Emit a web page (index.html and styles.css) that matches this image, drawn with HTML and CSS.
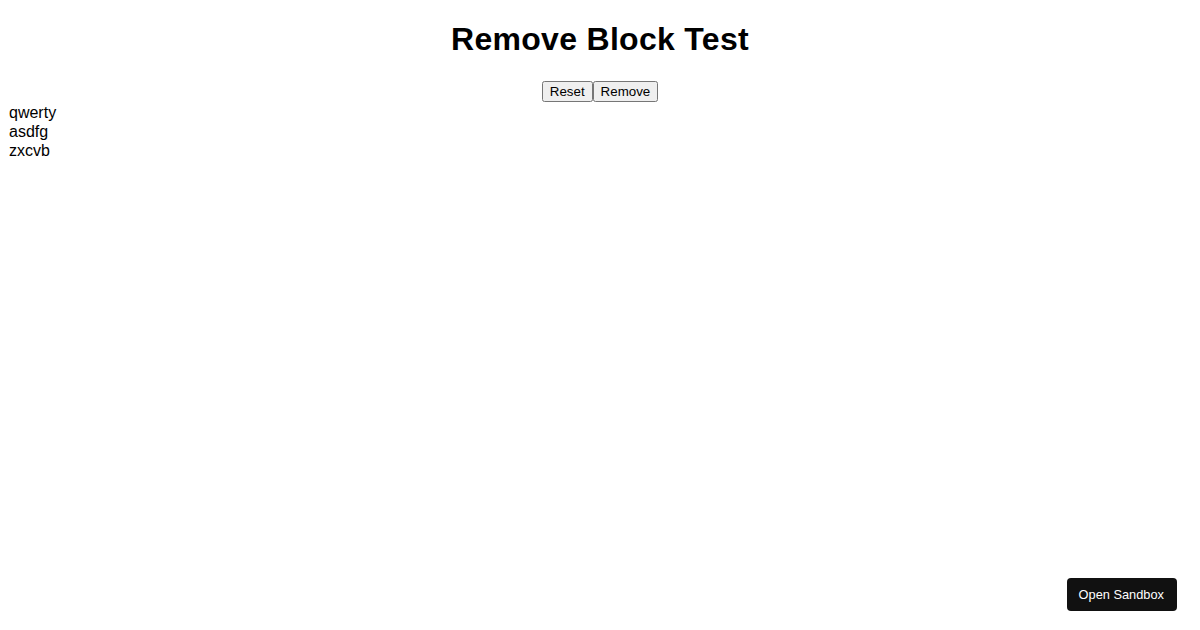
FILE: index.html
```html
<!DOCTYPE html>
<html>
<head>
<meta charset="utf-8">
<link rel="stylesheet" href="styles.css">
</head>
<body>
<h1 class="title">Remove Block Test</h1>
<div class="controls"><button>Reset</button><button>Remove</button></div>
<div class="list">
<div>qwerty</div>
<div>asdfg</div>
<div>zxcvb</div>
</div>
<a class="sandbox" href="#">Open Sandbox</a>
</body>
</html>
```
FILE: styles.css
```css
html, body {
  margin: 0;
  padding: 0;
}
body {
  padding: 0 8px;
  font-family: "Liberation Sans", Arial, sans-serif;
  font-size: 16px;
  color: #000;
  background: #fff;
}
.title {
  margin: 21px 0 23px;
  line-height: 37px;
  text-align: center;
  font-size: 32px;
  font-weight: bold;
  letter-spacing: 0.3px;
}
.controls {
  text-align: center;
  line-height: 21px;
}
.controls button {
  height: 21px;
  vertical-align: top;
}
.list {
  padding-top: 1px;
  padding-left: 1px;
  line-height: 19px;
}
.sandbox {
  position: fixed;
  right: 23px;
  bottom: 19px;
  height: 33px;
  line-height: 33px;
  padding: 0 13px 0 12px;
  background: #111;
  color: #fff;
  font-size: 12.8px;
  border-radius: 4px;
  text-decoration: none;
}
```
